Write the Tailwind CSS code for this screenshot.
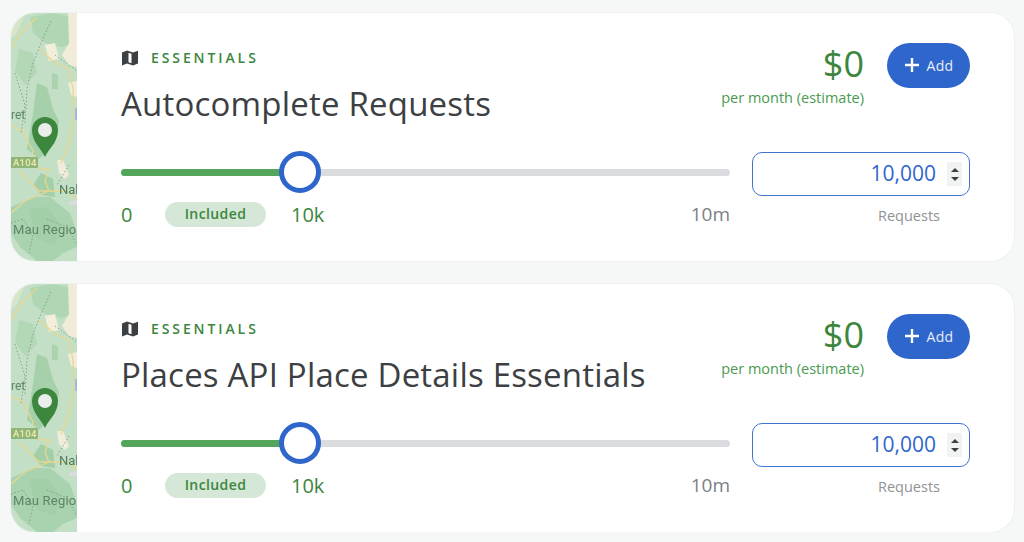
<!DOCTYPE html>
<html lang="en">
<head>
    <meta charset="UTF-8">
    <meta name="viewport" content="width=device-width, initial-scale=1.0">
    <title>Pricing calculator</title>
    <script src="https://cdn.jsdelivr.net/npm/@tailwindcss/browser@4"></script>
</head>
<body class="bg-[#f6f7f7] font-['Open_Sans',sans-serif] overflow-hidden">
    <!-- Shared drawings -->
    <svg width="0" height="0" class="absolute">
        <symbol id="map" viewBox="0 0 66 248">
            <rect width="66" height="248" fill="#c3e0c6"/>
            <path d="M19 4L40 0L62 4L66 22V30L50 34L34 30L22 20Z" fill="#afd7b3"/>
            <path d="M34 32L44 30L48 46L38 48Z" fill="#f3eddc"/>
            <path d="M57 0H66V54L58 52L51 42L58 30Z" fill="#f1ebd9"/>
            <path d="M57 70L66 68V84L60 82Z" fill="#f1ebd9"/>
            <path d="M0 0H14L6 20L0 26Z" fill="#d8e6c8"/>
            <path d="M8 36L22 40L26 60L14 72L4 58Z" fill="#b2d8b5"/>
            <path d="M41 60L47 62L47 76L41 76Z" fill="#abd3af"/>
            <path d="M26 70L36 74L42 96L48 108L44 130L28 146L16 136L22 100Z" fill="#a5d0aa"/>
            <path d="M0 194L22 184L39 184L59 200L66 220V234L52 240L42 248H26L9 234L0 220Z" fill="#a9d3ae"/>
            <path d="M18 196L36 194L50 212L44 232L26 226Z" fill="#a2cea8"/>
            <path d="M30 160L42 166L44 184L30 182L22 172Z" fill="#a2cea8"/>
            <path d="M46 147L52 147L58 162L54 166L48 160Z" fill="#f1ebd9"/>
            <path d="M64 95H66V107H64Z" fill="#9db8e6"/>
            <path d="M58 189L66 187V192H58Z" fill="#d9dde0"/>
            <path d="M26 4L10 20L0 36M0 112L12 118L22 138L20 148L30 156L38 156L34 168L38 178H56L66 186M8 158L20 170L28 178L38 178M0 200L14 188L38 178M28 36L44 50L58 56L62 76L63 100L58 130L50 150" fill="none" stroke="#e9d68f" stroke-width="1.300"/>
            <path d="M40 8L30 30L22 50L16 76L14 110M4 60L14 92L10 120M58 152L46 172M0 210L12 206L22 222L18 240M36 206L56 214L66 232M44 42L66 58" fill="none" stroke="#7f9a88" stroke-width="0.900" stroke-dasharray="1.500 2"/>
            <text x="0" y="106" font-family="Roboto" font-size="12" fill="#5d8468">ret</text>
            <rect y="144" width="27" height="11" rx="1" fill="#8fb57a"/>
            <text x="2" y="153" font-family="Roboto" font-size="9.500" font-weight="500" letter-spacing="0.300" fill="#f0e8a8">A104</text>
            <text x="48" y="181" font-family="Roboto" font-size="13" fill="#4f7f5f">Nal</text>
            <text x="2" y="221" font-family="Roboto" font-size="13" letter-spacing="0.200" fill="#5d8468">Mau Regio</text>
            <path d="M34 144C30 135 21 129 21 117A13 13 0 0 1 47 117C47 129 38 135 34 144Z" fill="#3c863e"/>
            <circle cx="34" cy="117" r="7" fill="#e9eeeb"/>
        </symbol>
        <symbol id="book-map" viewBox="0 0 18 18">
            <path d="M1 3.500L6 1.600L12 3.600L17 1.800V14.600L12 16.400L6 14.400L1 16.400Z" fill="#3c4043"/>
            <path d="M7.500 3.800L10.500 4.800V14.200L7.500 13.200Z" fill="#fff"/>
        </symbol>
    </svg>

    <div class="flex flex-col gap-[23px] pt-[13px] pl-[11px] pr-[10px]">
        <!-- Autocomplete card -->
        <section class="h-[248px] flex bg-white rounded-[24px] overflow-hidden shadow-[0_0_0_1px_#eff0f1]">
            <svg class="w-[66px] h-[248px] shrink-0 blur-[0.4px]"><use href="#map"/></svg>
            <div class="flex-1 pl-[44px] pr-[44px] pt-[36px]">
                <div class="h-[103px] flex justify-between">
                    <div>
                        <div class="h-[18px] flex items-center gap-[12px]">
                            <svg class="w-[18px] h-[18px]"><use href="#book-map"/></svg>
                            <span class="pb-[2px] text-[14px] font-semibold tracking-[2.900px] text-[#3c863e]">ESSENTIALS</span>
                        </div>
                        <h2 class="mt-[15px] text-[33px] leading-[44px] tracking-[0.2px] text-[#3c4043]">Autocomplete Requests</h2>
                    </div>
                    <div class="flex items-start gap-[23px]">
                        <div class="text-right">
                            <div class="text-[36px] leading-[40px] text-[#3c863e] mt-[-5px]">$0</div>
                            <div class="text-[14.500px] leading-[20px] mt-[4px] text-[#4a9a4f]">per month (estimate)</div>
                        </div>
                        <button class="w-[83px] h-[45px] mt-[-6px] flex items-center justify-center gap-[6px] pb-[1px] rounded-full bg-[#2f66cb] text-[#e8eefa] text-[14px] font-medium tracking-[0.3px]">
                            <svg class="w-[16px] h-[16px] mr-[1px]" viewBox="0 0 16 16"><path d="M8 1V15M1 8H15" stroke="#fff" stroke-width="2.400"/></svg>
                            Add
                        </button>
                    </div>
                </div>
                <div class="flex gap-[22px]">
                    <div class="flex-1">
                        <div class="relative h-[40px] flex items-center">
                            <div class="w-full h-[7px] rounded-full bg-[#dadce0]">
                                <div class="w-[165px] h-full rounded-l-full bg-[#52a55a]"></div>
                            </div>
                            <div class="absolute left-[158px] top-[-1px] w-[42px] h-[42px] rounded-full border-[5px] border-[#2f66cb] bg-white"></div>
                        </div>
                        <div class="mt-[10px] h-[25px] flex items-center text-[20px] text-[#3c863e]">
                            <span class="w-[44px]">0</span>
                            <span class="w-[101px] h-[25px] pb-[2px] flex items-center justify-center rounded-full bg-[#d5e8d7] text-[14px] font-semibold tracking-[0.4px]">Included</span>
                            <span class="ml-[25px]">10k</span>
                            <span class="ml-auto text-[19px] text-[#7c7f83]">10m</span>
                        </div>
                    </div>
                    <div class="w-[218px]">
                        <div class="h-[44px] flex items-center justify-end gap-[11px] pr-[7px] rounded-[10px] border border-[#3f74d2]">
                            <span class="text-[21px] text-[#2f66cb]">10,000</span>
                            <span class="w-[15px] h-[24px] flex flex-col items-center justify-center gap-[5px] bg-[#f1f2f2]">
                                <span class="border-x-[4px] border-b-[4px] border-x-transparent border-b-[#3c4043]"></span>
                                <span class="border-x-[4px] border-t-[4px] border-x-transparent border-t-[#3c4043]"></span>
                            </span>
                        </div>
                        <div class="mt-[9px] pr-[30px] text-right text-[14.500px] text-[#8f9396]">Requests</div>
                    </div>
                </div>
            </div>
        </section>

        <!-- Place Details card -->
        <section class="h-[248px] flex bg-white rounded-[24px] overflow-hidden shadow-[0_0_0_1px_#eff0f1]">
            <svg class="w-[66px] h-[248px] shrink-0 blur-[0.4px]"><use href="#map"/></svg>
            <div class="flex-1 pl-[44px] pr-[44px] pt-[36px]">
                <div class="h-[103px] flex justify-between">
                    <div>
                        <div class="h-[18px] flex items-center gap-[12px]">
                            <svg class="w-[18px] h-[18px]"><use href="#book-map"/></svg>
                            <span class="pb-[2px] text-[14px] font-semibold tracking-[2.900px] text-[#3c863e]">ESSENTIALS</span>
                        </div>
                        <h2 class="mt-[15px] text-[33px] leading-[44px] tracking-[0.2px] text-[#3c4043]">Places API Place Details Essentials</h2>
                    </div>
                    <div class="flex items-start gap-[23px]">
                        <div class="text-right">
                            <div class="text-[36px] leading-[40px] text-[#3c863e] mt-[-5px]">$0</div>
                            <div class="text-[14.500px] leading-[20px] mt-[4px] text-[#4a9a4f]">per month (estimate)</div>
                        </div>
                        <button class="w-[83px] h-[45px] mt-[-6px] flex items-center justify-center gap-[6px] pb-[1px] rounded-full bg-[#2f66cb] text-[#e8eefa] text-[14px] font-medium tracking-[0.3px]">
                            <svg class="w-[16px] h-[16px] mr-[1px]" viewBox="0 0 16 16"><path d="M8 1V15M1 8H15" stroke="#fff" stroke-width="2.400"/></svg>
                            Add
                        </button>
                    </div>
                </div>
                <div class="flex gap-[22px]">
                    <div class="flex-1">
                        <div class="relative h-[40px] flex items-center">
                            <div class="w-full h-[7px] rounded-full bg-[#dadce0]">
                                <div class="w-[165px] h-full rounded-l-full bg-[#52a55a]"></div>
                            </div>
                            <div class="absolute left-[158px] top-[-1px] w-[42px] h-[42px] rounded-full border-[5px] border-[#2f66cb] bg-white"></div>
                        </div>
                        <div class="mt-[10px] h-[25px] flex items-center text-[20px] text-[#3c863e]">
                            <span class="w-[44px]">0</span>
                            <span class="w-[101px] h-[25px] pb-[2px] flex items-center justify-center rounded-full bg-[#d5e8d7] text-[14px] font-semibold tracking-[0.4px]">Included</span>
                            <span class="ml-[25px]">10k</span>
                            <span class="ml-auto text-[19px] text-[#7c7f83]">10m</span>
                        </div>
                    </div>
                    <div class="w-[218px]">
                        <div class="h-[44px] flex items-center justify-end gap-[11px] pr-[7px] rounded-[10px] border border-[#3f74d2]">
                            <span class="text-[21px] text-[#2f66cb]">10,000</span>
                            <span class="w-[15px] h-[24px] flex flex-col items-center justify-center gap-[5px] bg-[#f1f2f2]">
                                <span class="border-x-[4px] border-b-[4px] border-x-transparent border-b-[#3c4043]"></span>
                                <span class="border-x-[4px] border-t-[4px] border-x-transparent border-t-[#3c4043]"></span>
                            </span>
                        </div>
                        <div class="mt-[9px] pr-[30px] text-right text-[14.500px] text-[#8f9396]">Requests</div>
                    </div>
                </div>
            </div>
        </section>
    </div>
</body>
</html>
